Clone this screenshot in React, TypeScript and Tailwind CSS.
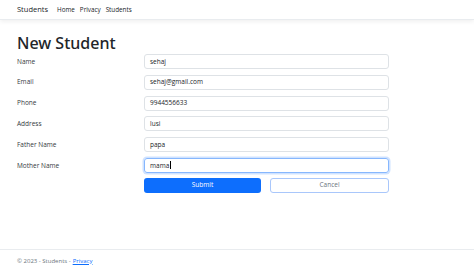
export default function App() {
  const fields = [
    { label: "Name", value: "sehaj" },
    { label: "Email", value: "sehaj@gmail.com" },
    { label: "Phone", value: "9944556633" },
    { label: "Address", value: "lusi" },
    { label: "Father Name", value: "papa" },
    { label: "Mother Name", value: "mama", focus: true },
  ]
  return (
    <div className="flex h-[270px] w-[474px] flex-col bg-white text-[#212529]" style={{ fontFamily: '"Open Sans", "Noto Sans", sans-serif' }}>
      <nav className="flex h-[20px] items-center border-b border-[#e9ecef] px-[17px] shadow-[0_2px_4px_rgba(0,0,0,0.06)]">
        <span className="mr-[9px] text-[7.5px]">Students</span>
        <div className="flex gap-[5px] text-[6.3px] text-[#212529]">
          <span>Home</span>
          <span>Privacy</span>
          <span>Students</span>
        </div>
      </nav>
      <main className="flex-1 px-[17px] pt-[13px]">
        <h1 className="mb-[1px] text-[16px] leading-[20px] font-medium" style={{ fontFamily: '"Noto Sans", sans-serif' }}>New Student</h1>
        <div className="flex flex-col gap-[5.8px]">
          {fields.map(f => (
            <div key={f.label} className="flex items-center">
              <label className="w-[127px] text-[6.5px] text-[#343a40]">{f.label}</label>
              <div className={`flex h-[15px] w-[245px] items-center rounded-[3px] border px-[5px] text-[6.5px] ${f.focus ? "border-[#86b7fe] shadow-[0_0_0_1.5px_rgba(13,110,253,0.2)]" : "border-[#dee2e6]"}`}>
                {f.value}
                {f.focus && <span className="ml-[0.5px] h-[8px] w-[0.8px] bg-black" />}
              </div>
            </div>
          ))}
          <div className="-mt-[1px] flex">
            <div className="w-[127px]" />
            <div className="flex w-[245px] gap-[9px]">
              <button className="h-[15px] flex-1 rounded-[3px] bg-[#0d6efd] text-[6.5px] text-white">Submit</button>
              <button className="h-[15px] flex-1 rounded-[3px] border border-[#a9c7fb] bg-white text-[6.5px] text-[#6c757d]">Cancel</button>
            </div>
          </div>
        </div>
      </main>
      <footer className="flex h-[21px] items-center border-t border-[#e9ecef] px-[17px] pt-[2px] text-[6px] text-[#6c757d]">
        © 2023 - Students - <a className="ml-[2px] text-[#0d6efd] underline">Privacy</a>
      </footer>
    </div>
  )
}
